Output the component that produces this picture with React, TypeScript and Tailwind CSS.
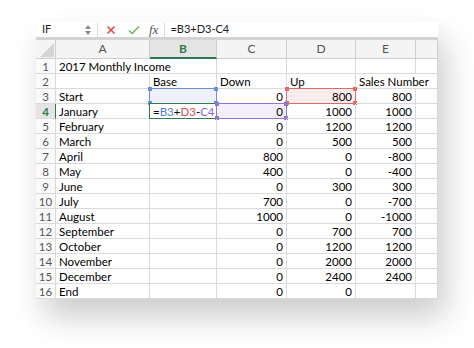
import type { ReactNode } from 'react'

type Mark = 'blue' | 'red' | 'purple' | 'green' | undefined

type Row = {
  n: number
  a?: string
  c?: string
  d?: string
  e?: string
  marks?: { b?: Mark; c?: Mark; d?: Mark }
}

const rows: Row[] = [
  { n: 3, a: 'Start', c: '0', d: '800', e: '800', marks: { b: 'blue', d: 'red' } },
  { n: 4, a: 'January', c: '0', d: '1000', e: '1000', marks: { b: 'green', c: 'purple' } },
  { n: 5, a: 'February', c: '0', d: '1200', e: '1200' },
  { n: 6, a: 'March', c: '0', d: '500', e: '500' },
  { n: 7, a: 'April', c: '800', d: '0', e: '-800' },
  { n: 8, a: 'May', c: '400', d: '0', e: '-400' },
  { n: 9, a: 'June', c: '0', d: '300', e: '300' },
  { n: 10, a: 'July', c: '700', d: '0', e: '-700' },
  { n: 11, a: 'August', c: '1000', d: '0', e: '-1000' },
  { n: 12, a: 'September', c: '0', d: '700', e: '700' },
  { n: 13, a: 'October', c: '0', d: '1200', e: '1200' },
  { n: 14, a: 'November', c: '0', d: '2000', e: '2000' },
  { n: 15, a: 'December', c: '0', d: '2400', e: '2400' },
  { n: 16, a: 'End', c: '0', d: '0' },
]

const cell = 'h-[15px] border-r border-b border-[#dadada] leading-[15px] whitespace-nowrap overflow-visible'

const fills: Record<string, string> = {
  blue: 'bg-[#eef1fb]',
  red: 'bg-[#fcecec]',
  purple: 'bg-[#f3effa]',
  green: 'bg-white',
}
const rings: Record<string, string> = {
  blue: 'border-[#6b8fdc]',
  red: 'border-[#e06a6a]',
  purple: 'border-[#9474d4]',
  green: 'border-[#2f7a4c] border-[1.5px]',
}
const dots: Record<string, string> = {
  blue: 'bg-[#6b8fdc]',
  red: 'bg-[#e06a6a]',
  purple: 'bg-[#9474d4]',
}

function Cell({ mark, right, children }: { mark?: Mark; right?: boolean; children?: ReactNode }) {
  return (
    <div className={`${cell} relative px-[3px] ${right ? 'text-right' : ''} ${mark ? fills[mark] : ''}`}>
      {children}
      {mark && (
        <div className={`absolute -top-px -left-px -right-px -bottom-px border ${rings[mark]}`}>
          {mark !== 'green' && (
            <>
              <span className={`absolute -left-[2px] -top-[2px] h-[4px] w-[4px] ${dots[mark]}`} />
              <span className={`absolute -right-[2px] -top-[2px] h-[4px] w-[4px] ${dots[mark]}`} />
              <span className={`absolute -left-[2px] -bottom-[2px] h-[4px] w-[4px] ${dots[mark]}`} />
              <span className={`absolute -right-[2px] -bottom-[2px] h-[4px] w-[4px] ${dots[mark]}`} />
            </>
          )}
        </div>
      )}
    </div>
  )
}

function RowHead({ n, active }: { n: number; active?: boolean }) {
  return (
    <div
      className={`${cell} text-center ${
        active ? 'bg-[#e4e4e4] font-bold text-[#2f7a4c] border-r-[#2f7a4c]' : 'bg-[#fafafa] text-[#555]'
      }`}
    >
      {n}
    </div>
  )
}

function Formula() {
  return (
    <span>
      =<span className="text-[#4f7fdc]">B3</span>+<span className="text-[#d94c4c]">D3</span>-
      <span className="text-[#8c63d0]">C4</span>
    </span>
  )
}

export default function App() {
  return (
    <div className="h-[348px] w-[474px] bg-white pl-[36px] pt-[22px] font-['Lato',sans-serif]">
      <div className="w-[402px] bg-white shadow-[8px_18px_30px_rgba(0,0,0,0.2)]">
        {/* formula bar */}
        <div className="flex h-[18px] items-center border-b-[3px] border-[#d3d3d3] text-[11px] text-[#222]">
          <span className="w-[44px] pl-[6px]">IF</span>
          <svg width="8" height="12" viewBox="0 0 8 12" className="ml-[4px]">
            <path d="M4 1 L7 5 H1 Z M4 11 L7 7 H1 Z" fill="#8a8a8a" />
          </svg>
          <div className="ml-[5px] h-[14px] w-px bg-[#dcdcdc]" />
          <svg width="10" height="10" viewBox="0 0 10 10" className="ml-[8px]">
            <path d="M1.5 1.5 L8.5 8.5 M8.5 1.5 L1.5 8.5" stroke="#e04848" strokeWidth="1.6" />
          </svg>
          <svg width="12" height="10" viewBox="0 0 12 10" className="ml-[12px]">
            <path d="M1 5.5 L4.2 8.5 L11 1.5" stroke="#5cb85c" strokeWidth="1.5" fill="none" />
          </svg>
          <span className="ml-[9px] font-['Liberation_Serif',serif] text-[13px] italic text-[#555]">fx</span>
          <div className="ml-[6px] h-[14px] w-px bg-[#dcdcdc]" />
          <span className="ml-[5px]">=B3+D3-C4</span>
        </div>

        {/* grid */}
        <div className="grid grid-cols-[20px_94px_67px_70px_69px_60px_22px] text-[11.5px] text-black">
          <div className="relative h-[19px] border-r border-b border-[#cfcfcf] bg-[#f4f4f4]">
            <svg width="14" height="14" viewBox="0 0 14 14" className="absolute right-[1px] bottom-[1px]">
              <path d="M14 0 V14 H0 Z" fill="#d4d4d4" />
            </svg>
          </div>
          {['A', 'B', 'C', 'D', 'E', ''].map((h) => (
            <div
              key={h}
              className={`h-[19px] border-r text-center leading-[18px] text-[12px] ${
                h === 'B'
                  ? 'border-b-2 border-b-[#2f7a4c] border-r-[#cfcfcf] bg-[#e4e4e4] font-bold text-[#2f7a4c]'
                  : 'border-b border-[#cfcfcf] bg-[#f4f4f4] text-[#555]'
              }`}
            >
              {h}
            </div>
          ))}

          <RowHead n={1} />
          <div className={`${cell} col-span-2 px-[3px]`}>2017 Monthly Income</div>
          <Cell />
          <Cell />
          <Cell />
          <Cell />

          <RowHead n={2} />
          <Cell />
          <Cell>Base</Cell>
          <Cell>Down</Cell>
          <Cell>Up</Cell>
          <div className={`${cell} col-span-2 px-[3px]`}>Sales Number</div>

          {rows.map((r) => (
            <div key={r.n} className="contents">
              <RowHead n={r.n} active={r.n === 4} />
              <Cell>{r.a}</Cell>
              <Cell mark={r.marks?.b}>{r.n === 4 ? <Formula /> : null}</Cell>
              <Cell mark={r.marks?.c} right>
                {r.c}
              </Cell>
              <Cell mark={r.marks?.d} right>
                {r.d}
              </Cell>
              <Cell right>{r.e}</Cell>
              <Cell />
            </div>
          ))}
        </div>
      </div>
    </div>
  )
}
